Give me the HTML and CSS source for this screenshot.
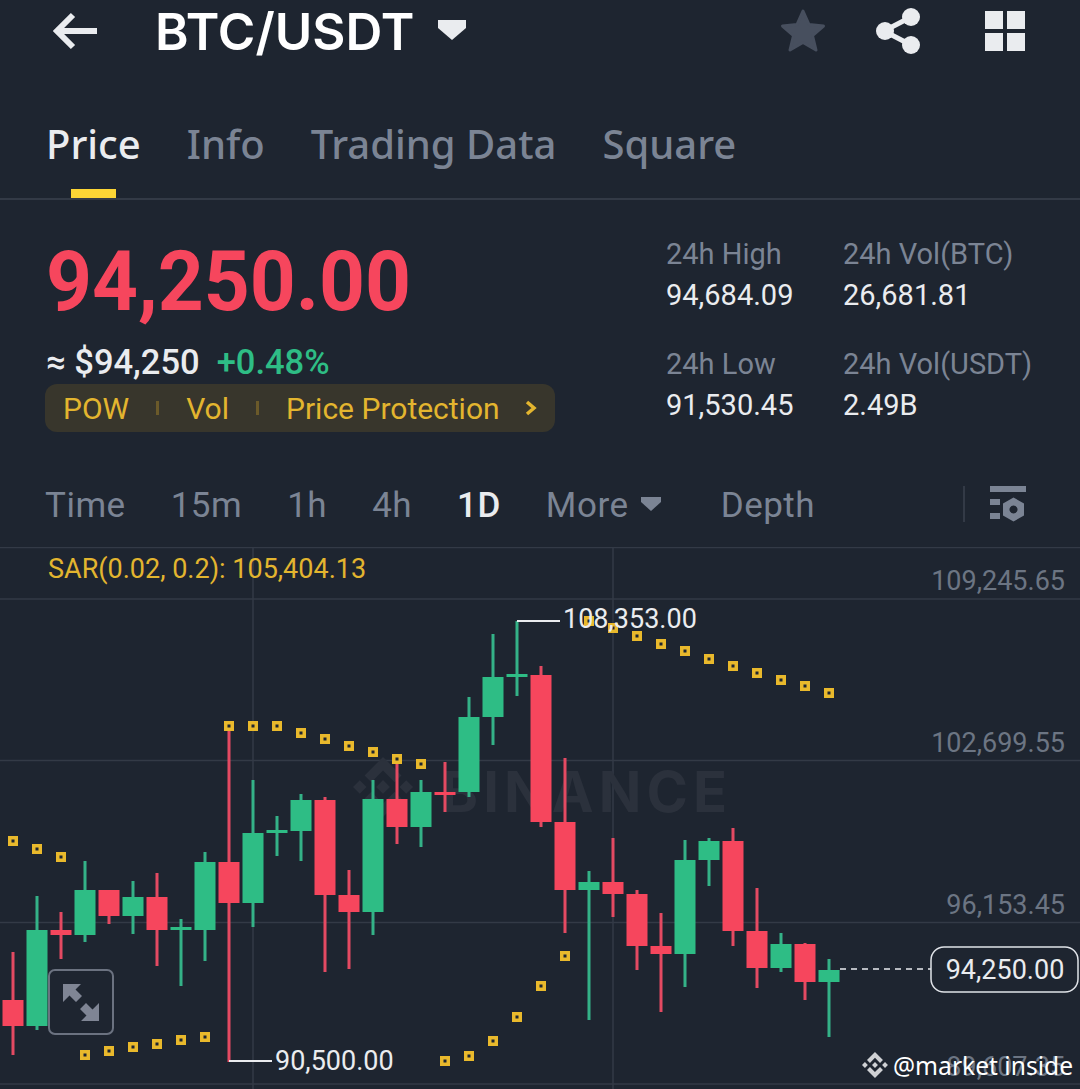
FILE: index.html
```html
<!DOCTYPE html>
<html lang="en">
<head>
    <meta charset="UTF-8">
    <title>BTC/USDT</title>
    <link rel="stylesheet" href="styles.css">
</head>
<body>
    <div class="screen">
        <header class="top-bar">
            <svg class="back-icon" width="46" height="40" viewBox="0 0 46 40">
                <path d="M45 20H5M21 4L5 20l16 16" fill="none" stroke="#eaecef" stroke-width="6"/>
            </svg>
            <h1 class="pair">BTC/USDT</h1>
            <svg class="pair-caret" width="28" height="20" viewBox="0 0 28 20">
                <path d="M0 0H28V8L14 20L0 8Z" fill="#eaecef"/>
            </svg>
            <div class="top-actions">
                <svg width="46" height="46" viewBox="0 0 46 46">
                    <path d="M23 3L29 16.5L43.500 18L32.500 27.500L36 42L23 34.500L10 42L13.500 27.500L2.500 18L17 16.500Z" fill="#474f5e" stroke="#474f5e" stroke-width="3" stroke-linejoin="round"/>
                </svg>
                <svg width="46" height="46" viewBox="0 0 46 46">
                    <path d="M36 9L9 23L36 37" fill="none" stroke="#eaecef" stroke-width="5"/>
                    <circle cx="36" cy="9" r="9" fill="#eaecef"/>
                    <circle cx="10" cy="23" r="9" fill="#eaecef"/>
                    <circle cx="36" cy="37" r="9" fill="#eaecef"/>
                </svg>
                <svg class="menu-icon" width="40" height="40" viewBox="0 0 40 40">
                    <path d="M0 0H18V18H0ZM22 0H40V18H22ZM0 22H18V40H0ZM22 22H40V40H22Z" fill="#eaecef"/>
                </svg>
            </div>
        </header>

        <nav class="tabs">
            <a class="tab active">Price</a>
            <a class="tab">Info</a>
            <a class="tab">Trading Data</a>
            <a class="tab">Square</a>
        </nav>

        <section class="summary">
            <div class="summary-left">
                <div class="last-price">94,250.00</div>
                <div class="fiat-row">
                    <span class="fiat">≈ $94,250</span>
                    <span class="change">+0.48%</span>
                </div>
                <div class="tags">
                    <span>POW</span>
                    <i class="tag-sep"></i>
                    <span>Vol</span>
                    <i class="tag-sep"></i>
                    <span>Price Protection</span>
                    <svg class="tag-arrow" width="12" height="16" viewBox="0 0 12 16">
                        <path d="M2 2l7 6-7 6" fill="none" stroke="#e3b52f" stroke-width="3.500"/>
                    </svg>
                </div>
            </div>
            <div class="stats">
                <div class="stat"><span>24h High</span><b>94,684.09</b></div>
                <div class="stat"><span>24h Vol(BTC)</span><b>26,681.81</b></div>
                <div class="stat"><span>24h Low</span><b>91,530.45</b></div>
                <div class="stat"><span>24h Vol(USDT)</span><b>2.49B</b></div>
            </div>
        </section>

        <div class="intervals">
            <span>Time</span>
            <span>15m</span>
            <span>1h</span>
            <span>4h</span>
            <span class="current">1D</span>
            <span class="more">More
                <svg width="20" height="14" viewBox="0 0 20 14"><path d="M0 0H20V5L10 14L0 5Z" fill="#7b8494"/></svg>
            </span>
            <span class="depth">Depth</span>
            <i class="interval-sep"></i>
            <svg class="chart-settings" width="36" height="36" viewBox="0 0 36 36">
                <path d="M0 0H36V6H0ZM0 13H10V19H0ZM0 27H10V33H0Z" fill="#7b8494"/>
                <path fill-rule="evenodd" d="M23.500 11.500L34 17.500V29.500L23.500 35.500L13 29.500V17.500ZM23.500 19.500a4 4 0 1 0 .01 0Z" fill="#7b8494"/>
            </svg>
        </div>

        <svg class="chart" width="1080" height="542" viewBox="0 547 1080 542">
            <g class="grid">
                <path d="M0 547.500H1080M0 599H1080M0 760.500H1080M0 922.500H1080M0 1084H1080M253 547V1089M613 547V1089"/>
            </g>
            <g class="watermark">
                <path transform="translate(353 757) scale(.474)" d="M38.730 53.200l24.590-24.580 24.600 24.600 14.300-14.310L63.320 0 24.420 38.900zM0 63.310l14.300-14.310 14.310 14.310-14.310 14.300zM38.730 73.410l24.590 24.590 24.600-24.600 14.310 14.290-38.900 38.910-38.910-38.880zM98 63.310l14.300-14.310 14.310 14.300-14.310 14.320zM77.830 63.300L63.320 48.780 52.590 59.510l-1.240 1.230-2.540 2.540 14.510 14.500 14.510-14.470z"/>
                <text x="441" y="812" textLength="286">BINANCE</text>
            </g>
            <text class="sar-label" x="48" y="578">SAR(0.02, 0.2): 105,404.13</text>
            <g class="axis">
                <text x="1065" y="590">109,245.65</text>
                <text x="1065" y="752">102,699.55</text>
                <text x="1065" y="914">96,153.45</text>
                <text x="1065" y="1076">89,607.35</text>
            </g>
            <g id="candles"></g>
            <g id="sar"></g>
            <path class="marker-line" d="M517 621H560M229 1061H272"/>
            <text class="marker" x="563" y="628">108,353.00</text>
            <text class="marker" x="275" y="1070">90,500.00</text>
            <path class="price-line" d="M840 969H931"/>
            <rect class="price-box" x="931" y="947" width="147" height="45" rx="13"/>
            <text class="price-text" x="1005" y="979">94,250.00</text>
            <rect class="expand-box" x="49" y="970" width="64" height="64" rx="6"/>
            <path class="expand-arrows" d="M63 984H81L75.500 989.500L82 996L76 1002L69.500 995.500L63 1002ZM99 1021H81L86.500 1015.500L80 1009L86 1003L92.500 1009.500L99 1003Z"/>
            <path class="source-logo" transform="translate(862 1052) scale(.205)" d="M38.730 53.200l24.590-24.580 24.600 24.600 14.300-14.310L63.320 0 24.420 38.900zM0 63.310l14.300-14.310 14.310 14.310-14.310 14.300zM38.730 73.410l24.590 24.590 24.600-24.600 14.310 14.290-38.900 38.910-38.910-38.880zM98 63.310l14.300-14.310 14.310 14.300-14.310 14.320zM77.830 63.300L63.320 48.780 52.590 59.510l-1.240 1.230-2.540 2.540 14.510 14.500 14.510-14.470z"/>
            <text class="source" x="893" y="1075">@market inside</text>
        </svg>
    </div>
    <script src="chart.js"></script>
</body>
</html>
```

FILE: styles.css
```css
* {
    box-sizing: border-box;
}

body {
    margin: 0;
    background-color: #1e2530;
    color: #eaecef;
    font-family: 'Roboto', sans-serif;
}

.screen {
    width: 1080px;
    height: 1089px;
    overflow: hidden;
}

.top-bar {
    display: flex;
    align-items: center;
    height: 62px;
    padding: 0 55px 0 52px;
}

.back-icon {
    flex: none;
}

.pair {
    margin: 0 0 0 57px;
    font-family: 'Inter', sans-serif;
    font-size: 51px;
    font-weight: 600;
    color: #fff;
}

.pair-caret {
    margin-left: 24px;
    margin-bottom: 2px;
}

.top-actions {
    display: flex;
    align-items: center;
    gap: 49px;
    margin-left: auto;
}

.menu-icon {
    margin-left: 15px;
}

.tabs {
    display: flex;
    gap: 46px;
    height: 138px;
    padding: 57px 0 0 46px;
    border-bottom: 2px solid #333a46;
    font-family: 'Noto Sans', sans-serif;
    font-size: 40px;
    font-weight: 500;
    line-height: 50px;
    color: #7b8494;
}

.tab {
    position: relative;
}

.tab.active {
    color: #eaecef;
}

.tab.active::after {
    content: "";
    position: absolute;
    left: 25px;
    top: 70px;
    width: 45px;
    height: 9px;
    background-color: #fcd535;
}

.summary {
    display: flex;
    justify-content: space-between;
    height: 268px;
    padding: 37px 0 0 45px;
}

.last-price {
    padding-left: 1px;
    font-size: 84px;
    font-weight: 700;
    line-height: 90px;
    color: #f6465d;
    transform: scaleX(.955);
    transform-origin: left;
}

.fiat-row {
    display: flex;
    gap: 17px;
    margin-top: 13px;
    padding-left: 1px;
    font-size: 34.500px;
    font-weight: 500;
    line-height: 44px;
}

.change {
    color: #2ebd85;
}

.tags {
    display: flex;
    align-items: center;
    width: 510px;
    height: 48px;
    padding: 0 18px 0 18px;
    border-radius: 12px;
    background-color: #38362c;
    font-size: 30px;
    color: #e3b52f;
}

.tag-sep {
    width: 3px;
    height: 14px;
    margin: 0 27px;
    background-color: #6b5a2a;
}

.tag-arrow {
    margin-left: auto;
}

.stats {
    display: grid;
    grid-template-columns: 177px 236px;
    grid-auto-rows: 110px;
    margin: -1px 1px 0 0;
}

.stat {
    display: flex;
    flex-direction: column;
    gap: 5px;
    font-size: 29px;
    line-height: 36px;
}

.stat span {
    color: #7b8494;
}

.stat b {
    font-weight: 400;
}

.intervals {
    display: flex;
    align-items: center;
    gap: 45px;
    height: 79px;
    padding: 0 54px 4px 45px;
    font-size: 35px;
    letter-spacing: .5px;
    color: #7b8494;
}

.intervals .current {
    font-weight: 500;
    color: #eaecef;
}

.more svg {
    margin-left: 3px;
    vertical-align: 6px;
}

.depth {
    margin-left: 15px;
}

.interval-sep {
    width: 2px;
    height: 36px;
    margin-left: auto;
    margin-right: -20px;
    margin-bottom: 4px;
    background-color: #333a46;
}

.chart-settings {
    margin-bottom: 4px;
}

.chart {
    display: block;
    font-family: 'Roboto', sans-serif;
}

.grid path {
    fill: none;
    stroke: #333a46;
    stroke-width: 1.500;
}

.watermark {
    fill: #2b313c;
}

.watermark text {
    font-family: 'Inter', sans-serif;
    font-size: 56px;
    font-weight: 700;
}

.sar-label {
    font-size: 27px;
    fill: #e3b52f;
}

.axis text {
    font-size: 27px;
    text-anchor: end;
    fill: #6c7583;
}

.candle-up {
    fill: #2ebd85;
}

.candle-down {
    fill: #f6465d;
}

.wick-up {
    fill: #34b287;
}

.wick-down {
    fill: #e44a62;
}

.sar-dot {
    fill: #e9b92c;
}

.sar-hole {
    fill: #1e2530;
}

.marker-line {
    fill: none;
    stroke: #eaecef;
    stroke-width: 2;
}

.marker {
    font-size: 27px;
    fill: #eaecef;
}

.price-line {
    fill: none;
    stroke: #eaecef;
    stroke-width: 1.500;
    stroke-dasharray: 6 5;
}

.price-box {
    fill: #1e2530;
    stroke: #e0e3e8;
    stroke-width: 1.500;
}

.price-text {
    font-size: 27px;
    text-anchor: middle;
    fill: #eaecef;
}

.expand-box {
    fill: #1e2530;
    stroke: #6b7280;
    stroke-width: 2;
}

.expand-arrows {
    fill: #7f8594;
}

.source-logo {
    fill: #cfd1d4;
}

.source {
    font-family: 'Noto Sans', sans-serif;
    font-size: 24.600px;
    fill: #fff;
}
```

FILE: chart.js
```js
// wick top, wick bottom, body top, body bottom, direction
const candles = [
    [952, 1055, 1000, 1026, "down"],
    [896, 1030, 930, 1026, "up"],
    [912, 959, 930, 935, "down"],
    [861, 942, 890, 935, "up"],
    [890, 924, 890, 916, "down"],
    [881, 934, 897, 916, "up"],
    [873, 966, 897, 930, "down"],
    [919, 986, 927, 930, "up"],
    [852, 961, 862, 930, "up"],
    [726, 1062, 862, 903, "down"],
    [780, 927, 833, 903, "up"],
    [816, 856, 830, 833, "up"],
    [794, 861, 800, 831, "up"],
    [797, 972, 800, 895, "down"],
    [870, 969, 895, 912, "down"],
    [780, 935, 799, 912, "up"],
    [763, 844, 799, 827, "down"],
    [780, 847, 792, 827, "up"],
    [762, 812, 792, 795, "down"],
    [697, 797, 717, 792, "up"],
    [634, 745, 677, 717, "up"],
    [621, 696, 674, 677, "up"],
    [666, 827, 675, 822, "down"],
    [758, 933, 822, 890, "down"],
    [871, 1020, 882, 890, "up"],
    [838, 917, 882, 894, "down"],
    [890, 970, 894, 946, "down"],
    [913, 1012, 946, 954, "down"],
    [840, 987, 860, 954, "up"],
    [838, 886, 841, 860, "up"],
    [828, 946, 841, 931, "down"],
    [888, 988, 931, 968, "down"],
    [933, 972, 944, 968, "up"],
    [943, 1000, 944, 982, "down"],
    [959, 1037, 970, 982, "up"]
];

// parabolic SAR dots as [candle index, y]
const sarDots = [
    [0, 841], [1, 849], [2, 857],
    [3, 1055], [4, 1051], [5, 1047], [6, 1044], [7, 1040], [8, 1037],
    [9, 726], [10, 726], [11, 726], [12, 733], [13, 739], [14, 746], [15, 752], [16, 759], [17, 764],
    [18, 1061], [19, 1056], [20, 1041], [21, 1017], [22, 986], [23, 956],
    [24, 621], [25, 628], [26, 636], [27, 644], [28, 651], [29, 659], [30, 666], [31, 673], [32, 680], [33, 686], [34, 693]
];

const candleX = i => 13 + i * 24;

document.getElementById("candles").innerHTML = candles.map(([high, low, top, bottom, dir], i) => {
    const x = candleX(i);
    return `<rect class="wick-${dir}" x="${x - 1.5}" y="${high}" width="3" height="${low - high}"/>` +
        `<rect class="candle-${dir}" x="${x - 10.5}" y="${top}" width="21" height="${bottom - top}"/>`;
}).join("");

document.getElementById("sar").innerHTML = sarDots.map(([i, y]) => {
    const x = candleX(i);
    return `<rect class="sar-dot" x="${x - 5}" y="${y - 5}" width="10" height="10"/>` +
        `<rect class="sar-hole" x="${x - 1.5}" y="${y - 1.5}" width="3" height="3"/>`;
}).join("");
```
